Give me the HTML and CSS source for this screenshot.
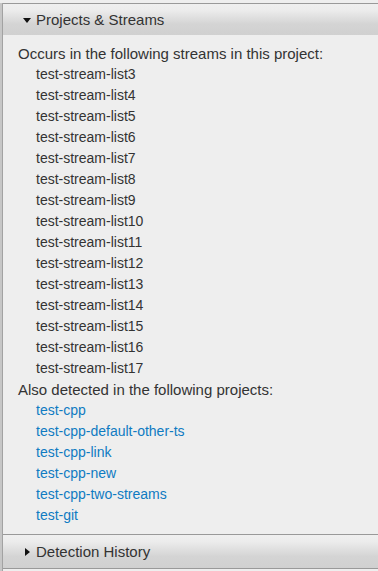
FILE: index.html
```html
<!DOCTYPE html>
<html>
<head>
<meta charset="utf-8">
<link rel="stylesheet" href="styles.css">
</head>
<body>
<div class="panel">
  <div class="inner">
    <div class="section-header open">
      <span class="tri-down"></span>
      <span class="title">Projects &amp; Streams</span>
    </div>
    <div class="section-body">
      <div class="label">Occurs in the following streams in this project:</div>
      <ul class="list">
        <li>test-stream-list3</li>
        <li>test-stream-list4</li>
        <li>test-stream-list5</li>
        <li>test-stream-list6</li>
        <li>test-stream-list7</li>
        <li>test-stream-list8</li>
        <li>test-stream-list9</li>
        <li>test-stream-list10</li>
        <li>test-stream-list11</li>
        <li>test-stream-list12</li>
        <li>test-stream-list13</li>
        <li>test-stream-list14</li>
        <li>test-stream-list15</li>
        <li>test-stream-list16</li>
        <li>test-stream-list17</li>
      </ul>
      <div class="label">Also detected in the following projects:</div>
      <ul class="list links">
        <li><a href="#">test-cpp</a></li>
        <li><a href="#">test-cpp-default-other-ts</a></li>
        <li><a href="#">test-cpp-link</a></li>
        <li><a href="#">test-cpp-new</a></li>
        <li><a href="#">test-cpp-two-streams</a></li>
        <li><a href="#">test-git</a></li>
      </ul>
    </div>
    <div class="section-header closed">
      <span class="tri-right"></span>
      <span class="title">Detection History</span>
    </div>
  </div>
</div>
</body>
</html>
```
FILE: styles.css
```css
html, body {
  margin: 0;
  padding: 0;
  background: #eeeeee;
}
body {
  font-family: "Liberation Sans", Arial, sans-serif;
  font-size: 14px;
  color: #333333;
  padding-top: 3px;
}
.panel {
  border-left: 2px solid #c6c6c6;
}
.inner {
  border-left: 1px solid #a2a2a2;
  min-height: 568px;
}
.section-header {
  display: flex;
  align-items: center;
  height: 31px;
  border-top: 1px solid #999999;
  background: linear-gradient(to bottom, #efefef 0%, #ececec 20%, #d4d4d4 65%, #d0d0d0 100%);
  padding-left: 20px;
  color: #333333;
  font-size: 15px;
}
.section-header.closed {
  height: 33px;
  border-bottom: 1px solid #999999;
}
.tri-down {
  width: 0;
  height: 0;
  border-left: 4px solid transparent;
  border-right: 4px solid transparent;
  border-top: 5px solid #111111;
  margin-right: 5px;
  margin-top: 1px;
}
.tri-right {
  width: 0;
  height: 0;
  border-top: 4px solid transparent;
  border-bottom: 4px solid transparent;
  border-left: 5px solid #111111;
  margin-left: 2px;
  margin-right: 6px;
}
.section-body {
  padding: 8px 0 8px 15px;
  line-height: 21px;
}
.label {
  font-size: 15px;
}
.list {
  list-style: none;
  margin: 0;
  padding: 0 0 0 18px;
}
.links a {
  color: #0f7bc2;
  text-decoration: none;
}
```
